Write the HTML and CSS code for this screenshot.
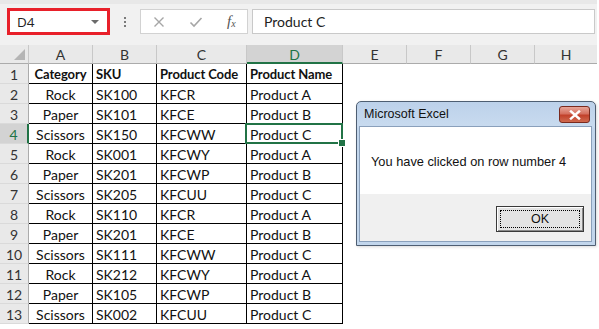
FILE: index.html
```html
<!DOCTYPE html>
<html>
<head>
<meta charset="utf-8">
<link rel="stylesheet" href="styles.css">
</head>
<body>
<div class="app">
  <div class="toolbar">
    <div class="namebox">
      <span class="namebox-text">D4</span>
      <span class="namebox-arrow"></span>
    </div>
    <div class="dots"><i></i><i></i><i></i></div>
    <div class="fbuttons">
      <svg class="ficon" width="12" height="12" viewBox="0 0 12 12"><path d="M1.5 1.5 L10.5 10.5 M10.5 1.5 L1.5 10.5" stroke="#a6a6a6" stroke-width="1.4" fill="none"/></svg>
      <svg class="ficon" width="14" height="12" viewBox="0 0 14 12"><path d="M1.5 6.5 L5 10 L12.5 2" stroke="#a6a6a6" stroke-width="1.6" fill="none"/></svg>
      <span class="fx">f<sub>x</sub></span>
    </div>
    <div class="finput">Product C</div>
  </div>

  <div class="sheet">
    <div class="corner"><span class="tri"></span></div>
    <div class="colh">A</div>
    <div class="colh">B</div>
    <div class="colh">C</div>
    <div class="colh sel">D</div>
    <div class="colh">E</div>
    <div class="colh">F</div>
    <div class="colh">G</div>
    <div class="colh last">H</div>

    <div class="rowh">1</div><div class="c ca b">Category</div><div class="c b">SKU</div><div class="c b">Product Code</div><div class="c b">Product Name</div><div class="e"></div><div class="e"></div><div class="e"></div><div class="e"></div>
    <div class="rowh">2</div><div class="c ca">Rock</div><div class="c">SK100</div><div class="c">KFCR</div><div class="c">Product A</div><div class="e"></div><div class="e"></div><div class="e"></div><div class="e"></div>
    <div class="rowh">3</div><div class="c ca">Paper</div><div class="c">SK101</div><div class="c">KFCE</div><div class="c">Product B</div><div class="e"></div><div class="e"></div><div class="e"></div><div class="e"></div>
    <div class="rowh sel">4</div><div class="c ca">Scissors</div><div class="c">SK150</div><div class="c">KFCWW</div><div class="c active">Product C</div><div class="e"></div><div class="e"></div><div class="e"></div><div class="e"></div>
    <div class="rowh">5</div><div class="c ca">Rock</div><div class="c">SK001</div><div class="c">KFCWY</div><div class="c">Product A</div><div class="e"></div><div class="e"></div><div class="e"></div><div class="e"></div>
    <div class="rowh">6</div><div class="c ca">Paper</div><div class="c">SK201</div><div class="c">KFCWP</div><div class="c">Product B</div><div class="e"></div><div class="e"></div><div class="e"></div><div class="e"></div>
    <div class="rowh">7</div><div class="c ca">Scissors</div><div class="c">SK205</div><div class="c">KFCUU</div><div class="c">Product C</div><div class="e"></div><div class="e"></div><div class="e"></div><div class="e"></div>
    <div class="rowh">8</div><div class="c ca">Rock</div><div class="c">SK110</div><div class="c">KFCR</div><div class="c">Product A</div><div class="e"></div><div class="e"></div><div class="e"></div><div class="e"></div>
    <div class="rowh">9</div><div class="c ca">Paper</div><div class="c">SK201</div><div class="c">KFCE</div><div class="c">Product B</div><div class="e"></div><div class="e"></div><div class="e"></div><div class="e"></div>
    <div class="rowh">10</div><div class="c ca">Scissors</div><div class="c">SK111</div><div class="c">KFCWW</div><div class="c">Product C</div><div class="e"></div><div class="e"></div><div class="e"></div><div class="e"></div>
    <div class="rowh">11</div><div class="c ca">Rock</div><div class="c">SK212</div><div class="c">KFCWY</div><div class="c">Product A</div><div class="e"></div><div class="e"></div><div class="e"></div><div class="e"></div>
    <div class="rowh">12</div><div class="c ca">Paper</div><div class="c">SK105</div><div class="c">KFCWP</div><div class="c">Product B</div><div class="e"></div><div class="e"></div><div class="e"></div><div class="e"></div>
    <div class="rowh">13</div><div class="c ca">Scissors</div><div class="c">SK002</div><div class="c">KFCUU</div><div class="c">Product C</div><div class="e"></div><div class="e"></div><div class="e"></div><div class="e"></div>
  </div>

  <div class="dialog">
    <div class="dlg-title">
      <span class="dlg-title-text">Microsoft Excel</span>
      <span class="dlg-close">
        <svg width="12" height="10" viewBox="0 0 12 10"><path d="M2 1.5 L10 8.5 M10 1.5 L2 8.5" stroke="#ffffff" stroke-width="2.4" stroke-linecap="square" fill="none"/></svg>
      </span>
    </div>
    <div class="dlg-inner">
      <div class="dlg-body">You have clicked on row number 4</div>
      <div class="dlg-foot">
        <div class="dlg-btn"><span class="dlg-btn-focus">OK</span></div>
      </div>
    </div>
  </div>
</div>
</body>
</html>
```

FILE: styles.css
```css
* { box-sizing: border-box; }
html, body { margin: 0; padding: 0; background: #ffffff; }
body { width: 599px; height: 329px; overflow: hidden; }

.app { position: relative; width: 599px; height: 329px; font-family: "Lato", "Liberation Sans", sans-serif; }

/* toolbar */
.toolbar {
  height: 45px;
  width: 597px;
  background: #f1f1f1;
  border-top: 4px solid #e8e8e8;
  display: flex;
  align-items: flex-start;
  padding: 4px 0 0 7px;
}
.namebox {
  width: 103px;
  height: 27px;
  border: 3px solid #e8202a;
  background: #ffffff;
  display: flex;
  align-items: center;
  justify-content: space-between;
  padding: 0 8px 0 7px;
}
.namebox-text { font-family: "Open Sans", "Liberation Sans", sans-serif; font-size: 13.5px; color: #222; }
.namebox-arrow {
  width: 0; height: 0;
  border-left: 4px solid transparent;
  border-right: 4px solid transparent;
  border-top: 4px solid #6b6b6b;
}
.dots {
  width: 30px;
  height: 27px;
  display: flex;
  flex-direction: column;
  align-items: center;
  justify-content: center;
  gap: 2px;
}
.dots i { display: block; width: 2px; height: 2px; background: #7a7a7a; }
.fbuttons {
  width: 108px;
  height: 25px;
  margin-top: 1px;
  background: #ffffff;
  border: 1px solid #d2d2d2;
  display: flex;
  align-items: center;
  padding: 0 0 0 12px;
}
.ficon { display: block; }
.fbuttons .ficon:first-child { margin-right: 24px; }
.fbuttons .ficon:nth-child(2) { margin-right: 24px; }
.fx { font-family: "Liberation Serif", serif; font-style: italic; font-size: 15px; color: #555; line-height: 1; }
.fx sub { font-size: 10px; vertical-align: -1px; }
.finput {
  margin-left: 4px;
  width: 343px;
  height: 25px;
  margin-top: 1px;
  background: #ffffff;
  border: 1px solid #c9c9c9;
  font-size: 14px;
  color: #222;
  padding: 3px 0 0 11px;
}

/* sheet */
.sheet {
  display: grid;
  grid-template-columns: 29px 64px 64px 90px 96px 64px 64px 64px 62px;
  grid-template-rows: 19px repeat(13, 20px);
  width: 597px;
  font-size: 14px;
  color: #111;
}
.corner { background: #e9e9e9; border-right: 1px solid #c8c8c8; border-bottom: 1px solid #ababab; position: relative; }
.tri {
  position: absolute; right: 3px; bottom: 3px;
  width: 0; height: 0;
  border-left: 11px solid transparent;
  border-bottom: 11px solid #b5b5b5;
}
.colh {
  background: #e9e9e9;
  border-right: 1px solid #c8c8c8;
  border-bottom: 1px solid #ababab;
  display: flex; align-items: center; justify-content: center;
  color: #333;
  font-size: 14px;
  padding-top: 1px;
}
.colh.last { border-right: none; }
.colh.sel { background: #d3d3d3; color: #217346; border-bottom: 2px solid #217346; }
.rowh {
  background: #e9e9e9;
  border-bottom: 1px solid #dadada;
  border-right: 1px solid #ababab;
  display: flex; align-items: center; justify-content: center;
  color: #333;
  padding-top: 1px;
}
.rowh.sel { background: #d3d3d3; color: #217346; border-right: 2px solid #217346; }
.c {
  border-right: 1px solid #000;
  border-bottom: 1px solid #000;
  display: flex; align-items: center;
  padding: 1px 0 0 3px;
  white-space: nowrap;
}
.c.ca { justify-content: center; padding-left: 0; }
.c.b { font-weight: bold; font-size: 13px; letter-spacing: -0.1px; }
.e { background: #fff; }
.c.active { position: relative; }
.c.active::after {
  content: "";
  position: absolute;
  left: -2px; top: -1px; right: -1px; bottom: -1px;
  border: 2px solid #217346;
}
.c.active::before {
  content: "";
  position: absolute;
  right: -4px; bottom: -4px;
  width: 6px; height: 6px;
  background: #217346;
  border: 1px solid #fff;
  z-index: 2;
}

/* dialog */
.dialog {
  position: absolute;
  left: 356px;
  top: 101px;
  width: 240px;
  height: 145px;
  border: 1px solid #4e5e72;
  border-radius: 5px 5px 0 0;
  background: linear-gradient(#bcd1ea, #c9dbef 25px, #c2d6ec 26px);
  font-family: "Liberation Sans", Arial, sans-serif;
  font-size: 12px;
  color: #111;
  display: flex;
  flex-direction: column;
  padding: 0 3px 3px 2px;
  box-shadow: 1px 1px 3px rgba(0,0,0,0.15);
}
.dlg-title {
  height: 24px;
  display: flex;
  align-items: center;
  justify-content: space-between;
  padding: 0 2px 0 5px;
}
.dlg-title-text { font-size: 12.5px; color: #111; }
.dlg-close {
  width: 31px;
  height: 17px;
  margin-top: 1px;
  border: 1px solid #7a2a1e;
  border-radius: 3px;
  background: linear-gradient(#e8a598, #d5705f 45%, #c2412b 55%, #cf6a4f);
  display: flex; align-items: center; justify-content: center;
}
.dlg-inner {
  flex: 1;
  border: 1px solid #8aa0bb;
  display: flex;
  flex-direction: column;
  background: #ffffff;
}
.dlg-body {
  height: 67px;
  background: #ffffff;
  padding: 27px 0 0 11px;
  font-size: 12.8px;
}
.dlg-foot {
  flex: 1;
  background: #f0f0f0;
  display: flex;
  justify-content: flex-end;
  align-items: flex-start;
  padding: 12px 7px 0 0;
}
.dlg-btn {
  width: 88px;
  height: 26px;
  border: 1px solid #3a3a3a;
  background: #e3e3e3;
  box-shadow: inset 1px 1px 0 #ffffff, inset -1px -1px 0 #8a8a8a;
  padding: 3px;
}
.dlg-btn-focus {
  display: flex;
  align-items: center;
  justify-content: center;
  width: 100%;
  height: 100%;
  border: 1px dotted #000;
  font-size: 12.5px;
  color: #111;
}
```
